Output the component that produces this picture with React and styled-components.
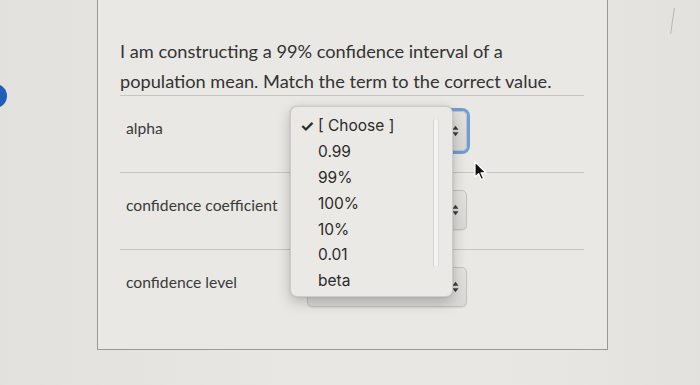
import React from "react";
import styled, { createGlobalStyle } from "styled-components";

const GlobalStyle = createGlobalStyle`
  html, body {
    margin: 0;
    padding: 0;
    background: #e4e3df;
  }
  body {
    width: 700px;
    height: 385px;
    overflow: hidden;
    font-family: Lato, "Open Sans", sans-serif;
  }
`;

const terms = ["alpha", "confidence coefficient", "confidence level"];
const options = ["[ Choose ]", "0.99", "99%", "100%", "10%", "0.01", "beta"];

const App = () => {
  return (
    <Screen>
      <GlobalStyle />
      <Dot />
      <Smudge />
      <Panel>
        <Question>
          I am constructing a 99% confidence interval of a population mean.
          Match the term to the correct value.
        </Question>
        <Rows>
          {terms.map((term, i) => (
            <Row key={term}>
              <Label>{term}</Label>
              <Select focused={i === 0}>
                <Arrows viewBox="0 0 8 14">
                  <path d="M4 1 L7.5 5.5 H0.5 Z" />
                  <path d="M4 13 L7.5 8.5 H0.5 Z" />
                </Arrows>
              </Select>
            </Row>
          ))}
        </Rows>
      </Panel>
      <Menu>
        {options.map((opt, i) => (
          <MenuItem key={opt}>
            <Check>{i === 0 ? "✓" : ""}</Check>
            <span>{opt}</span>
          </MenuItem>
        ))}
        <ScrollTrack />
      </Menu>
      <Cursor viewBox="0 0 14 20">
        <path
          d="M1 1 L1 16 L4.6 12.6 L7.2 18.6 L9.6 17.6 L7 11.8 L12 11.8 Z"
          fill="#111"
          stroke="#fff"
          strokeWidth="1.2"
          strokeLinejoin="round"
        />
      </Cursor>
    </Screen>
  );
};

export default App;

const Screen = styled.div`
  position: relative;
  width: 700px;
  height: 385px;
  background: linear-gradient(90deg, #e2e1dd 0%, #e8e7e3 45%, #e7e6e2 80%, #e2e1dd 100%);
  overflow: hidden;
`;

const Dot = styled.div`
  position: absolute;
  left: -17px;
  top: 84px;
  width: 24px;
  height: 24px;
  border-radius: 50%;
  background: #1f5fb8;
`;

const Smudge = styled.div`
  position: absolute;
  left: 672px;
  top: 8px;
  width: 1px;
  height: 26px;
  background: #b9b8b4;
  transform: rotate(8deg);
`;

const Panel = styled.div`
  margin-left: 97px;
  width: 511px;
  height: 350px;
  box-sizing: border-box;
  padding: 36px 23px 0 22px;
  border: 1px solid #9a9995;
  border-top: none;
  background: #e9e8e4;
`;

const Question = styled.p`
  margin: 0 0 -1px;
  font-size: 18.2px;
  line-height: 30px;
  color: #333;
  width: 455px;
`;

const Rows = styled.div`
  display: flex;
  flex-direction: column;
`;

const Row = styled.div`
  display: flex;
  align-items: flex-start;
  height: 77px;
  border-top: 1px solid #c6c5c1;
  box-sizing: border-box;
`;

const Label = styled.div`
  width: 187px;
  box-sizing: border-box;
  padding: 23px 0 0 6px;
  font-size: 15.7px;
  color: #3a3a3a;
`;

const Select = styled.div`
  margin-top: ${(p) => (p.focused ? "15px" : "17px")};
  width: 160px;
  height: 40px;
  box-sizing: border-box;
  display: flex;
  align-items: center;
  justify-content: flex-end;
  padding-right: 7px;
  border-radius: 5px;
  background: linear-gradient(180deg, #e3e2df, #d9d8d5);
  border: 1px solid #c3c2be;
  box-shadow: ${(p) => (p.focused ? "0 0 0 3px #6c9fd6" : "0 1px 1px rgba(0,0,0,0.08)")};
`;

const Arrows = styled.svg`
  width: 7px;
  height: 12px;
  fill: #3c3c3c;
`;

const Menu = styled.div`
  position: absolute;
  left: 290px;
  top: 106px;
  width: 163px;
  height: 191px;
  box-sizing: border-box;
  padding: 6px 0 0 0;
  border-radius: 7px;
  background: #ebe9e6;
  border: 1px solid rgba(0, 0, 0, 0.12);
  box-shadow: 0 5px 14px rgba(0, 0, 0, 0.22), 0 0 2px rgba(0, 0, 0, 0.15);
  font-family: Inter, "Noto Sans", sans-serif;
`;

const MenuItem = styled.div`
  display: flex;
  align-items: center;
  height: 25.8px;
  font-size: 15.5px;
  color: #2b2b2b;
`;

const Check = styled.span`
  flex: 0 0 27px;
  padding-left: 9px;
  box-sizing: border-box;
  font-size: 16px;
  font-weight: 700;
  line-height: 1;
`;

const ScrollTrack = styled.div`
  position: absolute;
  left: 143px;
  top: 12px;
  width: 4px;
  height: 148px;
  border-radius: 2px;
  background: #f4f3f1;
  box-shadow: -1px 0 0 #d6d4d0, 1px 0 0 #dedcd8;
`;

const Cursor = styled.svg`
  position: absolute;
  left: 474px;
  top: 161px;
  width: 14px;
  height: 20px;
`;
